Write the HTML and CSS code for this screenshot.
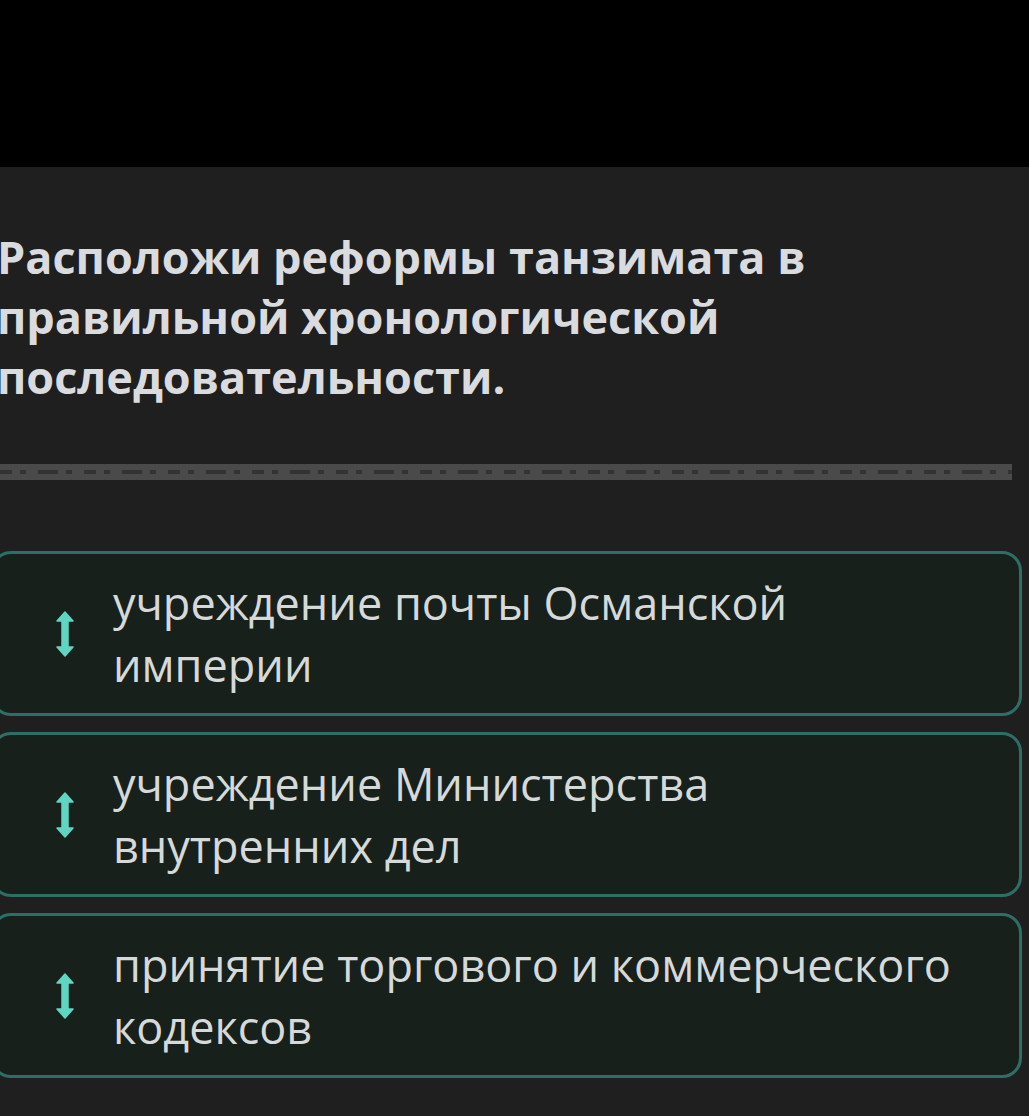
FILE: index.html
```html
<!DOCTYPE html>
<html lang="ru">
<head>
<meta charset="utf-8">
<link rel="stylesheet" href="styles.css">
<title>Танзимат</title>
</head>
<body>
<div class="topbar"></div>
<main class="quiz">
  <h1 class="question">Расположи реформы танзимата в правильной хронологической последовательности.</h1>
  <div class="divider"></div>
  <ul class="answers">
    <li class="answer">
      <svg class="handle" viewBox="0 0 20 48" aria-hidden="true"><path d="M10 2 L18 11 H13 V37 H18 L10 46 L2 37 H7 V11 H2 Z"/></svg>
      <span class="answer-text">учреждение почты Османской империи</span>
    </li>
    <li class="answer">
      <svg class="handle" viewBox="0 0 20 48" aria-hidden="true"><path d="M10 2 L18 11 H13 V37 H18 L10 46 L2 37 H7 V11 H2 Z"/></svg>
      <span class="answer-text">учреждение Министерства внутренних дел</span>
    </li>
    <li class="answer">
      <svg class="handle" viewBox="0 0 20 48" aria-hidden="true"><path d="M10 2 L18 11 H13 V37 H18 L10 46 L2 37 H7 V11 H2 Z"/></svg>
      <span class="answer-text">принятие торгового и коммерческого кодексов</span>
    </li>
  </ul>
</main>
</body>
</html>
```
FILE: styles.css
```css
* { box-sizing: border-box; }

html, body {
  margin: 0;
  padding: 0;
  background: #1f1f1f;
  font-family: "Open Sans", "Noto Sans", sans-serif;
}

.topbar {
  height: 167px;
  background: #000;
}

.quiz {
  margin-left: -9px;
  width: 1031px;
  padding-top: 60px;
}

.question {
  margin: 0 0 0 6px;
  font-size: 45px;
  font-weight: 700;
  line-height: 60px;
  color: #d9dbde;
  width: 900px;
}

/* grey rule with a dark dashed stripe through its middle */
.divider {
  margin: 57px 0 0 9px;
  height: 16px;
  width: 1012px;
  background-color: #4a4a4a;
  background-image: repeating-linear-gradient(90deg,
    #333 0 12px, transparent 12px 20px,
    #333 20px 26px, transparent 26px 38px,
    #333 38px 58px, transparent 58px 66px,
    #333 66px 72px, transparent 72px 84px);
  background-size: 100% 4px;
  background-position: 0 6px;
  background-repeat: no-repeat;
}

.answers {
  list-style: none;
  margin: 71px 0 0;
  padding: 0;
  display: flex;
  flex-direction: column;
  gap: 16px;
}

.answer {
  height: 165px;
  border: 3px solid #2f6e66;
  border-radius: 20px;
  background: #17201b;
  display: flex;
  align-items: center;
  padding-left: 61px;
}

.handle {
  width: 20px;
  height: 48px;
  fill: #5fd6c2;
  stroke: #5fd6c2;
  stroke-width: 1.5;
  stroke-linejoin: round;
  flex: none;
  margin-right: 38px;
}

.answer-text {
  font-size: 45px;
  line-height: 62px;
  color: #d6d9d9;
  width: 860px;
}
```
